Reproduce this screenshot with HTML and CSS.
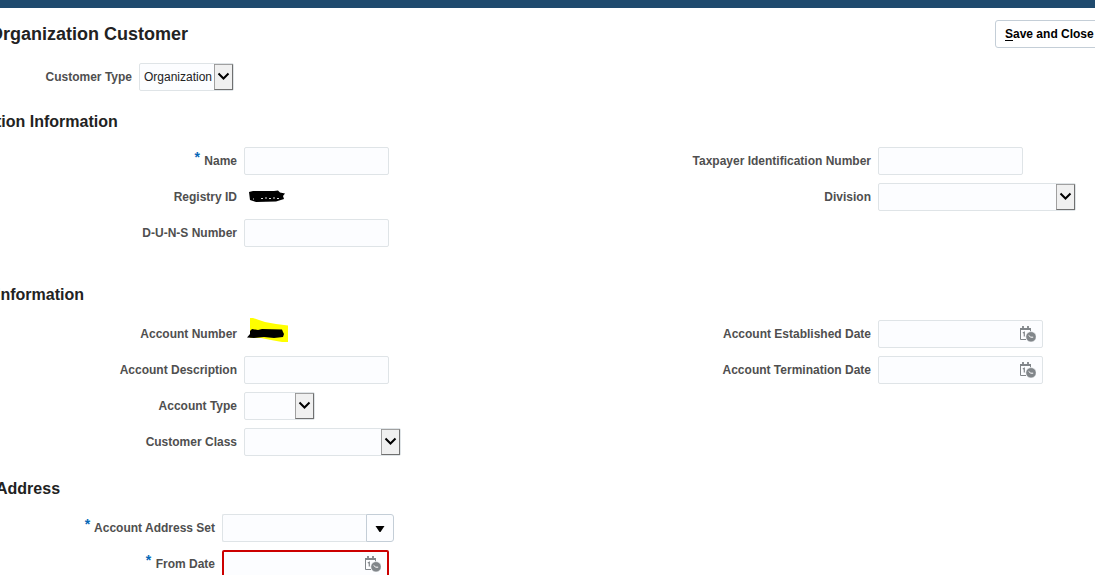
FILE: index.html
```
<!DOCTYPE html>
<html lang="en">
<head>
<meta charset="utf-8">
<title>Organization Customer</title>
<link rel="stylesheet" href="styles.css">
</head>
<body>
<svg class="defs" aria-hidden="true">
  <symbol id="chevron" viewBox="0 0 19 26">
    <rect x="0.5" y="0.5" width="18" height="25" fill="#f0f0f0" stroke="#707070"/>
    <path d="M0.5 25.5V0.5H18.5" fill="none" stroke="#a0a0a0"/>
    <path d="M4.500 9.500L9.500 14.500L14.500 9.500" fill="none" stroke="#000" stroke-width="2"/>
  </symbol>
  <symbol id="calendar" viewBox="0 0 16 16">
    <path d="M6 13.500H0.500V3H10.500V5.500" fill="none" stroke="#81868a" stroke-width="1"/>
    <path d="M0 2H11V4H0Z" fill="#81868a"/>
    <path d="M3 0V3M8 0V3" stroke="#81868a" stroke-width="1.800"/>
    <path d="M2.800 7L4.300 6.200V10.500" fill="none" stroke="#81868a" stroke-width="1.200"/>
    <circle cx="11" cy="10.800" r="5.200" fill="#81868a" stroke="#fcfdff" stroke-width="0.600"/>
    <path d="M8.600 9.400L10.800 11.200H13.200" fill="none" stroke="#fff" stroke-width="1"/>
  </symbol>
</svg>
<div class="page">
  <div class="topbar"></div>
  <header class="header">
    <h1 class="title">Organization Customer</h1>
    <button class="save" type="button"><u>S</u>ave and Close</button>
  </header>
  <form class="form">
    <div class="row row-type">
      <label class="label" for="ctype">Customer Type</label>
      <span class="pick pick-type"><select id="ctype"><option>Organization</option></select><svg class="chev"><use href="#chevron"/></svg></span>
    </div>

    <section class="section section-org">
      <h2 class="heading heading-org">tion Information</h2>
      <div class="columns">
        <div class="rows">
          <div class="row"><label class="label" for="name"><span class="req">*</span> Name</label><input class="text" id="name" type="text"></div>
          <div class="row"><span class="label">Registry ID</span>
            <svg class="mark" width="48" height="28" viewBox="0 0 48 28" aria-hidden="true">
              <path d="M5 9L9 8H30L34 7.500L36 9.500L41 10.500L39 13L40 16L32 18.500L12 19L6 17Z" fill="#000"/>
              <path d="M17 15.500H19M21 15H23M25 15.500H27M29 15H31M33 15.500H35M9 16H10" stroke="#ddd" stroke-width="1.200"/>
            </svg>
          </div>
          <div class="row"><label class="label" for="duns">D-U-N-S Number</label><input class="text" id="duns" type="text"></div>
        </div>
        <div class="rows">
          <div class="row"><label class="label" for="tax">Taxpayer Identification Number</label><input class="text" id="tax" type="text"></div>
          <div class="row"><label class="label" for="division">Division</label><span class="pick pick-division"><select id="division"><option></option></select><svg class="chev"><use href="#chevron"/></svg></span></div>
        </div>
      </div>
    </section>

    <section class="section section-account">
      <h2 class="heading heading-account">Information</h2>
      <div class="columns">
        <div class="rows">
          <div class="row"><span class="label">Account Number</span>
            <svg class="mark" width="48" height="28" viewBox="0 0 48 28" aria-hidden="true">
              <path d="M6 -2H9L15 0L21 2L32 4L44 5.500V22H38L27 20L17 18H6Z" fill="#ff0"/>
              <path d="M6 11L8 9L14 10L18 9L38 9.500L39 12L40 14L39 17L30 18L20 17L10 18L3 17.500L6 14Z" fill="#000"/>
            </svg>
          </div>
          <div class="row"><label class="label" for="desc">Account Description</label><input class="text" id="desc" type="text"></div>
          <div class="row"><label class="label" for="atype">Account Type</label><span class="pick pick-account"><select id="atype"><option></option></select><svg class="chev"><use href="#chevron"/></svg></span></div>
          <div class="row"><label class="label" for="class">Customer Class</label><span class="pick pick-class"><select id="class"><option></option></select><svg class="chev"><use href="#chevron"/></svg></span></div>
        </div>
        <div class="rows">
          <div class="row"><label class="label" for="est">Account Established Date</label><span class="date"><input id="est" type="text"><button type="button" aria-label="Select date"><svg><use href="#calendar"/></svg></button></span></div>
          <div class="row"><label class="label" for="term">Account Termination Date</label><span class="date"><input id="term" type="text"><button type="button" aria-label="Select date"><svg><use href="#calendar"/></svg></button></span></div>
        </div>
      </div>
    </section>

    <section class="section section-address">
      <h2 class="heading heading-address">Address</h2>
      <div class="rows">
        <div class="row"><label class="label" for="set"><span class="req">*</span> Account Address Set</label><span class="combo"><input id="set" type="text"><button type="button" aria-label="Open list"><svg viewBox="0 0 10 6"><path d="M0.500 0H9.500L5.500 6H4.500Z"/></svg></button></span></div>
        <div class="row"><label class="label" for="from"><span class="req">*</span> From Date</label><span class="date date-error"><input id="from" type="text"><button type="button" aria-label="Select date"><svg><use href="#calendar"/></svg></button></span></div>
      </div>
    </section>
  </form>
</div>
</body>
</html>
```
FILE: styles.css
```
* {
  box-sizing: border-box;
}

body {
  margin: 0;
  background: #fff;
  color: #4f4f4f;
  font: 12px/16px "Liberation Sans", Arial, sans-serif;
}

input,
select,
button {
  margin: 0;
  padding: 0;
  border: 0;
  background: none;
  color: #222;
  font: inherit;
}

.defs {
  position: absolute;
  width: 0;
  height: 0;
}

.page {
  overflow: hidden;
}

.topbar {
  height: 8px;
  background: #1f4a6e;
}

.header {
  display: flex;
  justify-content: space-between;
  padding-top: 12px;
}

.title {
  margin: 0 0 0 -11px;
  color: #222;
  font-size: 18px;
  line-height: 28px;
}

.save {
  height: 28px;
  width: 108px;
  margin-right: -8px;
  padding-left: 9px;
  border: 1px solid #c4ced7;
  border-radius: 3px;
  background: #fff;
  color: #000;
  font-weight: bold;
  text-align: left;
  white-space: nowrap;
}

.save u {
  text-underline-offset: 2px;
}

.form {
  padding-top: 15px;
}

.rows {
  display: grid;
  gap: 8px;
  align-content: start;
}

.row {
  display: flex;
  gap: 7px;
  height: 28px;
}

.label {
  width: 237px;
  flex: none;
  font-weight: bold;
  line-height: 28px;
  text-align: right;
  white-space: nowrap;
}

.row-type .label {
  width: 132px;
}

.section-address .label {
  width: 215px;
}

.req {
  margin-right: 1px;
  color: #0668b8;
  font-size: 14px;
  line-height: 16px;
  vertical-align: 3px;
}

.heading {
  margin: 0;
  color: #222;
  font-size: 16px;
  line-height: 22px;
  white-space: nowrap;
}

.section {
  display: grid;
  gap: 14px;
}

.section-org {
  padding-top: 20px;
}

.section-account {
  padding-top: 37px;
}

.section-address {
  padding-top: 22px;
}

.heading-org,
.heading-account,
.heading-address {
  margin-left: -4px;
}

.columns {
  display: grid;
  grid-template-columns: 634fr 461fr;
}

.text,
.pick select,
.date,
.combo input {
  border: 1px solid #dfe4e7;
  border-radius: 2px;
  background: #fcfdff;
}

.text {
  width: 145px;
  padding: 0 5px;
}

.pick {
  position: relative;
}

.pick select {
  width: 100%;
  height: 28px;
  padding-left: 4px;
  appearance: none;
}

.chev {
  position: absolute;
  top: 1px;
  right: 1px;
  width: 19px;
  height: 26px;
  pointer-events: none;
}

.pick-type {
  width: 95px;
}

.pick-division {
  width: 198px;
}

.pick-account {
  width: 71px;
}

.pick-class {
  width: 157px;
}

.mark {
  overflow: visible;
}

.date {
  display: flex;
  width: 165px;
}

.date input {
  flex: 1;
  min-width: 0;
  padding-left: 5px;
}

.date button {
  width: 28px;
}

.date svg {
  display: block;
  width: 16px;
  height: 16px;
  margin: 0 auto;
}

.date-error {
  width: 167px;
  border: 2px solid #c00;
}

.combo {
  display: flex;
}

.combo input {
  width: 145px;
  padding: 0 5px;
  border-right: 0;
}

.combo button {
  width: 28px;
  margin-left: -1px;
  border: 1px solid #c4ced7;
  border-radius: 0 3px 3px 0;
  background: #fcfdff;
}

.combo svg {
  display: block;
  width: 10px;
  height: 6px;
  margin: 2px 8px 0;
}
```
